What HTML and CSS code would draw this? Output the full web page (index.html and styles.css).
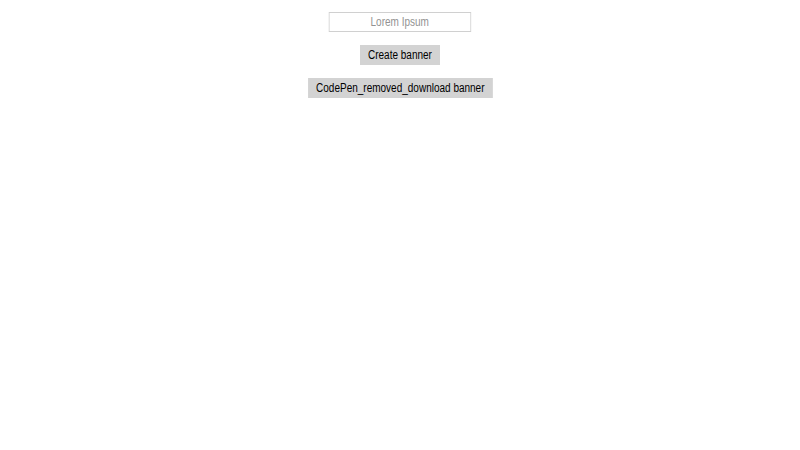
FILE: index.html
```html
<!DOCTYPE html>
<html>
<head>
<meta charset="utf-8">
<link rel="stylesheet" href="styles.css">
</head>
<body>
<div class="wrap">
  <input class="field narrow" type="text" placeholder="Lorem Ipsum">
  <button class="btn narrow">Create banner</button>
  <button class="btn narrow">CodePen_removed_download banner</button>
</div>
</body>
</html>
```
FILE: styles.css
```css
html, body {
  margin: 0;
  padding: 0;
  background: #fff;
  font-family: "Liberation Sans", Arial, sans-serif;
}
.wrap {
  display: flex;
  flex-direction: column;
  align-items: center;
  gap: 13px;
  padding-top: 12px;
}
/* the reference text is a narrow sans; emulate by horizontal compression */
.narrow {
  transform: scaleX(0.8);
  transform-origin: center;
}
.field {
  box-sizing: border-box;
  width: 177.5px;
  height: 20px;
  border: 1px solid #d0d0d0;
  padding: 0 5px;
  text-align: center;
  font-family: "Liberation Sans", Arial, sans-serif;
  font-size: 12.5px;
  color: #333;
  outline: none;
}
.field::placeholder {
  color: #929292;
}
.btn {
  box-sizing: border-box;
  height: 20px;
  border: none;
  background: #d3d3d3;
  padding: 0 10px;
  font-family: "Liberation Sans", Arial, sans-serif;
  font-size: 12.5px;
  color: #000;
}
```
